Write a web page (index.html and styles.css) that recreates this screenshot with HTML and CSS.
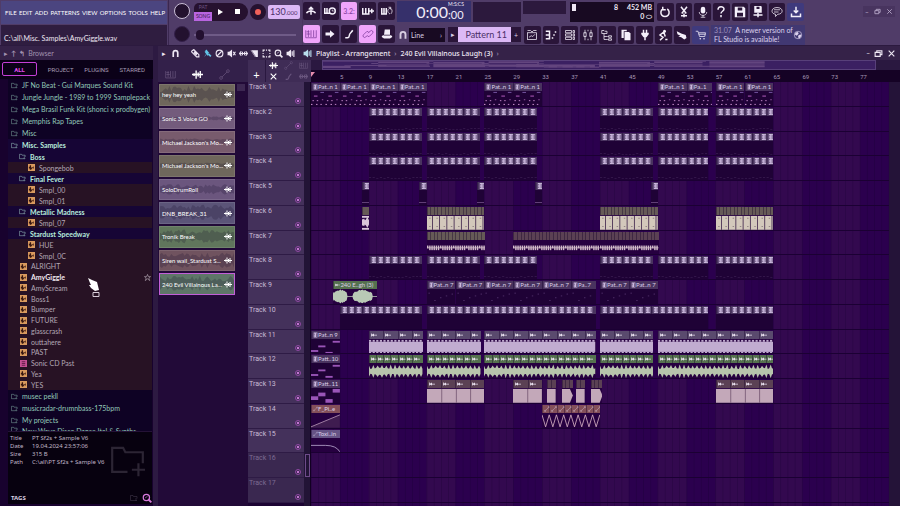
FILE: index.html
```
<!DOCTYPE html>
<html lang="en">
<head>
    <meta charset="UTF-8">
    <meta name="viewport" content="width=device-width, initial-scale=1.0">
    <title>Playlist - Arrangement</title>
    <link rel="stylesheet" href="styles.css">
</head>
<body>
    <!-- icons -->
    <svg class="symbols" aria-hidden="true">
        <symbol id="i-metro" viewBox="0 0 16 16"><path class="mid" d="M8 4v9M2 11c2-4 10-4 12 0M5 6l3-3 3 3"/></symbol>
        <symbol id="i-wait" viewBox="0 0 16 16"><path class="mid" d="M1 4v7h7M4 4v7"/><circle class="mid" cx="11" cy="8" r="4"/><path d="M11 6v2h2"/></symbol>
        <symbol id="i-keysplus" viewBox="0 0 16 16"><path class="mid" d="M1 4v8h8V4M5 4v7M10 8h6M13 5v6"/></symbol>
        <symbol id="i-keysloop" viewBox="0 0 16 16"><path class="mid" d="M1 4v8h6V4M4 4v7"/><path d="M12 4c-4 2-4 6 0 8M12 4c4 2 3 6 1 8M10 3h3v3"/></symbol>
        <symbol id="i-keys" viewBox="0 0 16 16"><path d="M1 3v10h14V3M4.500 3v9M8 3v9M11.500 3v9M2 5h4M2 8h5"/></symbol>
        <symbol id="i-arrow" viewBox="0 0 16 16"><path class="f" d="M2 6h6V3l6 5-6 5v-3H2z"/></symbol>
        <symbol id="i-slide" viewBox="0 0 16 16"><path class="mid" d="M3 13h3c3 0 2-3 3-5s2-2 4-5"/></symbol>
        <symbol id="i-link" viewBox="0 0 16 16"><path d="M7 10L5 12a2 2 0 0 1-3-3l4-4a2 2 0 0 1 3 1M8 7l3-3a2 2 0 0 1 3 3l-4 4a2 2 0 0 1-3-1"/></symbol>
        <symbol id="i-hat" viewBox="0 0 16 16"><path class="f" d="M5 2h7v7H4zM1 12c0-2 2-3 3-2h8c1-1 3 0 3 2l-3 2H4z"/></symbol>
        <symbol id="i-magnet" viewBox="0 0 16 16"><path class="thick" d="M4 14V7a4 4 0 0 1 8 0v7"/></symbol>
        <symbol id="i-undo" viewBox="0 0 16 16"><path class="mid" d="M5 4a5.500 5.500 0 1 0 6 0M5 1v4h4"/></symbol>
        <symbol id="i-cut" viewBox="0 0 16 16"><path class="mid" d="M4 1l7 9M12 1L5 10M8 10v5M4 13h8"/></symbol>
        <symbol id="i-mic" viewBox="0 0 16 16"><rect class="f" x="5" y="1" width="6" height="9" rx="3"/><path d="M3 8c0 6 10 6 10 0M8 12v3M5 15h6"/></symbol>
        <symbol id="i-help" viewBox="0 0 16 16"><path class="mid" d="M4 5c0-5 8-5 8-1 0 3-4 3-4 6M8 12v3"/></symbol>
        <symbol id="i-save" viewBox="0 0 16 16"><path class="f" fill-rule="evenodd" d="M1 1h12l2 2v12H1zM5 2v4h6V2zM4 9v5h8V9z"/></symbol>
        <symbol id="i-savenew" viewBox="0 0 16 16"><path class="f" fill-rule="evenodd" d="M3 0h9l1 1v8H3zM6 1v3h4V1z"/><path class="mid" d="M2 12h12M8 9v6"/></symbol>
        <symbol id="i-chat" viewBox="0 0 16 16"><path d="M8 2c9 0 9 9 1 9l-3 3v-3C-1 10 0 2 8 2zM4 5h8M4 8h6"/></symbol>
        <symbol id="i-down" viewBox="0 0 16 16"><path class="mid" d="M8 1v8M5 6l3 3 3-3M2 10v4h12v-4"/></symbol>
        <symbol id="i-playlist" viewBox="0 0 16 16"><rect x="2" y="5" width="12" height="9"/><path d="M2 2h4M10 2h4M4 11l3-2 2 1 3-3M6 2l2 2 2-2"/></symbol>
        <symbol id="i-roll" viewBox="0 0 16 16"><path class="mid" d="M1 3h5M1 8h5M1 13h5M6 2v12M9 12h2M11 8h2M13 4h2"/></symbol>
        <symbol id="i-rack" viewBox="0 0 16 16"><path d="M2 2h8v3H2zM2 6.500h8v3H2zM2 11h8v3H2zM12 2h2v3h-2zM12 6.500h2v3h-2zM12 11h2v3h-2z"/></symbol>
        <symbol id="i-mixer" viewBox="0 0 16 16"><path d="M4 1v5M4 9v6M12 1v5M12 9v6M8 1v2M8 13v2"/><rect x="2.500" y="5" width="3" height="5"/><rect x="10.500" y="5" width="3" height="5"/></symbol>
        <symbol id="i-tree" viewBox="0 0 16 16"><path d="M1 2h3l1 1h3v3H1zM4 6v8h5M4 10h5M10 9h4v2h-4zM10 13h4v2h-4z"/></symbol>
        <symbol id="i-page" viewBox="0 0 16 16"><path class="f" d="M2 1h7v2H5v9H2z"/><path class="f" d="M6 4h6l2 2v9H6z"/></symbol>
        <symbol id="i-plug" viewBox="0 0 16 16"><path class="f" d="M5 1h2v4h2V1h2v4h2v2l-3 4H9v4H7v-4H6L3 7V5h2z"/></symbol>
        <symbol id="i-person" viewBox="0 0 16 16"><circle class="f" cx="10" cy="3" r="2"/><path class="mid" d="M9 4L4 8l4 3-4 4M9 4l2 6M11 14h3"/></symbol>
        <symbol id="i-touch" viewBox="0 0 16 16"><path class="f" d="M1 3l6 3 6 2 1 4-3 2-4-3-4-1 3-1-4-2z"/></symbol>
        <symbol id="i-cart" viewBox="0 0 16 16"><path d="M1 3h3l2 7h7l1-5H5M5 7h9"/><circle class="f" cx="7" cy="13" r="1"/><circle class="f" cx="12" cy="13" r="1"/></symbol>
        <symbol id="i-globe" viewBox="0 0 16 16"><circle cx="8" cy="8" r="6"/><path class="f" d="M4 4l4-1 1 3-3 3-3-2zM9 8l4-1v3l-3 4-2-3z"/></symbol>
        <symbol id="i-folder" viewBox="0 0 16 16"><path d="M10 13H1V3h5l1 2h7v4M12 8v6M10 12l2 2 2-2"/></symbol>
        <symbol id="i-folderplus" viewBox="0 0 16 16"><path d="M8 13H1V2h5l1 2h8v5M13 9v6M10 12h6"/></symbol>
        <symbol id="i-sample" viewBox="0 0 8 8"><path fill="#d99a5e" stroke="none" d="M0 0h8v8H0z"/><path fill="#37160f" stroke="none" d="M1 3h1V1.500h1.500V4H5L6.500 2.500v3L5 4.500 3.500 6.500H2V5H1z"/></symbol>
        <symbol id="i-song" viewBox="0 0 8 8"><path fill="#c44f93" stroke="none" d="M0 0h8v8H0z"/><path d="M2 2h4M2 4h4M2 6h4" stroke="#5b1945"/></symbol>
        <symbol id="i-wave" viewBox="0 0 16 16"><path class="mid" d="M0 8h16M3 6v4M6 2v12M9 5v6M12 3v10"/></symbol>
        <symbol id="i-auto" viewBox="0 0 16 16"><path d="M4 12l8-8"/><circle cx="3" cy="13" r="2"/><circle cx="13" cy="3" r="2"/></symbol>
        <symbol id="i-brush" viewBox="0 0 16 16"><path class="thick" d="M5 2l5 6M4 4l5 7M10 9l4 4"/><path d="M3 13c2-1 1-3 3-4"/></symbol>
        <symbol id="i-pencil" viewBox="0 0 16 16"><path class="mid" d="M2 3l3-2 9 9v4h-4L1 5zM5 6l5 5M6 4l5 5"/></symbol>
        <symbol id="i-ban" viewBox="0 0 16 16"><circle class="mid" cx="8" cy="8" r="6"/><path class="mid" d="M4 12l8-8"/></symbol>
        <symbol id="i-mute" viewBox="0 0 16 16"><path class="f" d="M1 5h3l5-4v14l-5-4H1z"/><path class="mid" d="M11 5l4 6M15 5l-4 6"/></symbol>
        <symbol id="i-slip" viewBox="0 0 16 16"><path class="mid" d="M1 8h14M4 4L1 8l3 4M12 4l3 4-3 4M6 5v6M10 5v6"/></symbol>
        <symbol id="i-slice" viewBox="0 0 16 16"><path class="f" d="M1 2h13v12H9z"/><path d="M2 2l8 12" stroke="#3a264f"/></symbol>
        <symbol id="i-select" viewBox="0 0 16 16"><path class="mid" d="M2 5V2h3M11 2h3v3M14 11v3h-3M5 14H2v-3M7 2h2M7 14h2M2 7v2M14 7v2"/></symbol>
        <symbol id="i-zoom" viewBox="0 0 16 16"><circle class="mid" cx="7" cy="7" r="5"/><path class="thick" d="M10 10l5 5"/><path d="M5 8l4-3"/></symbol>
        <symbol id="i-speaker" viewBox="0 0 16 16"><path class="f" d="M1 5h3l5-4v14l-5-4H1z"/><path class="mid" d="M11 4v8M14 2v12"/></symbol>
        <symbol id="i-pat" viewBox="0 0 8 8"><path fill="#cbb8dd" stroke="none" d="M1 0h6v8H1z"/><path fill="#49335f" stroke="none" d="M1 2h2v1H1zM1 5h2v1H1zM5 1h1v6H5z"/></symbol>
        <symbol id="i-clip" viewBox="0 0 8 8"><path fill="#e8dfee" stroke="none" d="M0 2h1v1.500L4 2v1.500L8 3.500v1H4V6L1 4.500V6H0z"/></symbol>
        <symbol id="i-win" viewBox="0 0 16 16"><path class="mid" d="M2 6h9v7H2zM5 6V3h9v7h-3"/></symbol>
        <symbol id="i-x" viewBox="0 0 16 16"><path class="mid" d="M3 3l10 10M13 3L3 13"/></symbol>
        <symbol id="i-star" viewBox="0 0 16 16"><path d="M8 1l2 5h5l-4 3 2 6-5-4-5 4 2-6-4-3h5z"/></symbol>
    </svg>

    <header class="top">
        <div class="top-left">
            <nav class="menu">
                <a href="#">FILE</a><a href="#">EDIT</a><a href="#">ADD</a><a href="#">PATTERNS</a><a href="#">VIEW</a><a href="#">OPTIONS</a><a href="#">TOOLS</a><a href="#">HELP</a>
            </nav>
            <div class="hint">C:\all\Misc. Samples\AmyGiggle.wav</div>
        </div>
        <div class="knobs">
            <span class="knob"></span>
            <span class="knob small"></span>
        </div>
        <div class="transport">
            <div class="line">
                <div class="pill">
                    <div class="mode"><button>PAT</button><button class="on">SONG</button></div>
                    <button class="play" aria-label="Play"></button>
                    <button class="stop" aria-label="Stop"></button>
                </div>
                <button class="rec" aria-label="Record"></button>
                <div class="tempo">130<small>.000</small></div>
            </div>
            <div class="line"><input class="pos" type="range" min="0" max="100" value="2" aria-label="Song position"></div>
        </div>
        <div class="tools five">
            <button aria-label="Metronome"><svg><use href="#i-metro"/></svg></button>
            <button aria-label="Wait"><svg><use href="#i-wait"/></svg></button>
            <button class="lit count">3.2:</button>
            <button aria-label="Overdub"><svg><use href="#i-keysplus"/></svg></button>
            <button aria-label="Loop record"><svg><use href="#i-keysloop"/></svg></button>
            <button class="lit" aria-label="Typing keyboard"><svg><use href="#i-keys"/></svg></button>
            <button aria-label="Follow"><svg><use href="#i-arrow"/></svg></button>
            <button aria-label="Slide"><svg><use href="#i-slide"/></svg></button>
            <button class="lit" aria-label="Link"><svg><use href="#i-link"/></svg></button>
            <button aria-label="Tutorial"><svg><use href="#i-hat"/></svg></button>
        </div>
        <div class="center">
            <div class="line displays">
                <div class="clock">
                    <b>0:00</b>
                    <div><small>M:S:CS</small><span>:00</span></div>
                </div>
                <div class="box"></div>
                <div class="box half"></div>
                <div class="cpu"><i></i><div><b>8</b><b>452 MB</b></div><div><b></b><b>0 ⬭</b></div></div>
                <div class="tools eight">
                    <button aria-label="Undo"><svg><use href="#i-undo"/></svg></button>
                    <button aria-label="Cut"><svg><use href="#i-cut"/></svg></button>
                    <button aria-label="Record audio"><svg><use href="#i-mic"/></svg></button>
                    <button aria-label="Help"><svg><use href="#i-help"/></svg></button>
                    <button aria-label="Save"><svg><use href="#i-save"/></svg></button>
                    <button aria-label="Save new"><svg><use href="#i-savenew"/></svg></button>
                    <button aria-label="Info"><svg><use href="#i-chat"/></svg></button>
                    <button class="blue" aria-label="Download"><svg><use href="#i-down"/></svg></button>
                </div>
            </div>
            <div class="line">
                <svg class="snap"><use href="#i-magnet"/></svg>
                <label class="snap-mode"><select aria-label="Snap"><option>Line</option></select>›</label>
                <div class="pattern">
                    <button aria-label="Pattern list">▸</button>
                    <input value="Pattern 11" aria-label="Pattern">
                    <button aria-label="Add pattern">+</button>
                </div>
                <div class="tools windows">
                    <button aria-label="Playlist"><svg><use href="#i-playlist"/></svg></button>
                    <button aria-label="Piano roll"><svg><use href="#i-roll"/></svg></button>
                    <button aria-label="Channel rack"><svg><use href="#i-rack"/></svg></button>
                    <button aria-label="Mixer"><svg><use href="#i-mixer"/></svg></button>
                    <button aria-label="Browser"><svg><use href="#i-tree"/></svg></button>
                    <button aria-label="Plugins"><svg><use href="#i-page"/></svg></button>
                    <button aria-label="Plug-in picker"><svg><use href="#i-plug"/></svg></button>
                    <button aria-label="Stop sound"><svg><use href="#i-person"/></svg></button>
                    <button aria-label="Touch"><svg><use href="#i-touch"/></svg></button>
                    <button class="blue" aria-label="Shop"><svg><use href="#i-cart"/></svg></button>
                </div>
                <div class="news">
                    <p><time>31.07</time>&nbsp; A newer version of<br>FL Studio is available!</p>
                    <svg><use href="#i-globe"/></svg>
                </div>
            </div>
        </div>
        <div class="win-btns">
            <button aria-label="Minimize">‒</button>
            <button aria-label="Restore"><svg><use href="#i-win"/></svg></button>
            <button aria-label="Close"><svg><use href="#i-x"/></svg></button>
        </div>
    </header>

    <main class="work">
        <aside class="browser">
            <div class="browser-title"><span>▸</span><b>↑</b><b>↰</b>Browser</div>
            <div class="tabs">
                <button class="active">ALL</button>
                <button>PROJECT</button>
                <button>PLUGINS</button>
                <button>STARRED</button>
            </div>
            <ul class="tree">
                <li class="folder"><svg><use href="#i-folder"/></svg>JF No Beat - Gui Marques Sound Kit</li>
                <li class="folder"><svg><use href="#i-folder"/></svg>Jungle Jungle - 1989 to 1999 Samplepack</li>
                <li class="folder"><svg><use href="#i-folder"/></svg>Mega Brasil Funk Kit (shonci x prodbygen)</li>
                <li class="folder"><svg><use href="#i-folder"/></svg>Memphis Rap Tapes</li>
                <li class="folder"><svg><use href="#i-folder"/></svg>Misc</li>
                <li class="folder open"><svg><use href="#i-folder"/></svg>Misc. Samples</li>
                <li class="sub open"><svg><use href="#i-folder"/></svg>Boss</li>
                <li class="deep"><svg><use href="#i-sample"/></svg>Spongebob</li>
                <li class="sub open"><svg><use href="#i-folder"/></svg>Final Fever</li>
                <li class="deep"><svg><use href="#i-sample"/></svg>Smpl_00</li>
                <li class="deep"><svg><use href="#i-sample"/></svg>Smpl_01</li>
                <li class="sub open"><svg><use href="#i-folder"/></svg>Metallic Madness</li>
                <li class="deep"><svg><use href="#i-sample"/></svg>Smpl_07</li>
                <li class="sub open"><svg><use href="#i-folder"/></svg>Stardust Speedway</li>
                <li class="deep"><svg><use href="#i-sample"/></svg>HUE</li>
                <li class="deep"><svg><use href="#i-sample"/></svg>Smpl_0C</li>
                <li class="leaf"><svg><use href="#i-sample"/></svg>ALRIGHT</li>
                <li class="leaf current"><svg><use href="#i-sample"/></svg>AmyGiggle<svg class="star"><use href="#i-star"/></svg></li>
                <li class="leaf"><svg><use href="#i-sample"/></svg>AmyScream</li>
                <li class="leaf"><svg><use href="#i-sample"/></svg>Boss1</li>
                <li class="leaf"><svg><use href="#i-sample"/></svg>Bumper</li>
                <li class="leaf"><svg><use href="#i-sample"/></svg>FUTURE</li>
                <li class="leaf"><svg><use href="#i-sample"/></svg>glasscrash</li>
                <li class="leaf"><svg><use href="#i-sample"/></svg>outtahere</li>
                <li class="leaf"><svg><use href="#i-sample"/></svg>PAST</li>
                <li class="leaf"><svg><use href="#i-song"/></svg>Sonic CD Past</li>
                <li class="leaf"><svg><use href="#i-sample"/></svg>Yea</li>
                <li class="leaf"><svg><use href="#i-sample"/></svg>YES</li>
                <li class="folder"><svg><use href="#i-folder"/></svg>musec pekll</li>
                <li class="folder"><svg><use href="#i-folder"/></svg>musicradar-drumnbass-175bpm</li>
                <li class="folder"><svg><use href="#i-folder"/></svg>My projects</li>
                <li class="folder cut"><svg><use href="#i-folder"/></svg>New Wave Disco Dance Ital &amp; Synths</li>
            </ul>
            <div class="info">
                <dl>
                    <dt>Title</dt><dd>PT Sf2s + Sample V6</dd>
                    <dt>Date</dt><dd>19.04.2024 23:57:06</dd>
                    <dt>Size</dt><dd>315 B</dd>
                    <dt>Path</dt><dd>C:\all\PT Sf2s + Sample V6</dd>
                </dl>
                <svg><use href="#i-folderplus"/></svg>
            </div>
            <div class="tags">
                <label for="tags">TAGS</label>
                <input id="tags">
                <svg><use href="#i-folder"/></svg>
                <svg class="search"><use href="#i-zoom"/></svg>
            </div>
            <svg class="pointer" viewBox="0 0 12 20"><path fill="#fff" stroke="none" d="M0 0l4 2 5 2 2 8-4 1-4-3-2-3h2L2 5z"/><path fill="none" stroke="#d8ccd8" d="M5 14.500h6v4H5z"/></svg>
        </aside>

        <section class="playlist">
            <div class="title">
                <span class="caret">▸</span>
                <svg><use href="#i-magnet"/></svg>
                <div class="modes">
                    <svg><use href="#i-pencil"/></svg>
                    <svg class="cyan"><use href="#i-brush"/></svg>
                    <svg><use href="#i-ban"/></svg>
                    <svg><use href="#i-mute"/></svg>
                    <svg><use href="#i-slip"/></svg>
                    <svg><use href="#i-slice"/></svg>
                    <svg><use href="#i-select"/></svg>
                    <svg><use href="#i-zoom"/></svg>
                    <svg><use href="#i-speaker"/></svg>
                </div>
                <svg class="out"><use href="#i-speaker"/></svg>
                <h1>Playlist - Arrangement <em>›</em> 240 Evil Villainous Laugh (3) <em>›</em></h1>
                <div class="title-btns">
                    <button aria-label="Minimize">‒</button>
                    <button aria-label="Restore"><svg><use href="#i-win"/></svg></button>
                    <button aria-label="Close"><svg><use href="#i-x"/></svg></button>
                </div>
            </div>
            <div class="panes">
                <div class="picker">
                    <div class="picker-tabs">
                        <svg class="dim"><use href="#i-keys"/></svg>
                        <svg><use href="#i-wave"/></svg>
                        <svg class="dim"><use href="#i-auto"/></svg>
                    </div>
                    <div class="picker-main">
                        <div class="picker-list" id="picker"></div>
                        <div class="picker-bar"></div>
                    </div>
                </div>
                <div class="arrange">
                    <div class="corner">
                        <button aria-label="Add track">+</button>
                        <div>
                            <svg><use href="#i-wave"/></svg><svg class="dim"><use href="#i-auto"/></svg><svg class="dim"><use href="#i-keys"/></svg>
                            <svg><use href="#i-x"/></svg><svg class="dim"><use href="#i-slide"/></svg><svg class="dim"><use href="#i-slip"/></svg>
                        </div>
                    </div>
                    <div class="head">
                        <div class="overview"><svg id="overview" viewBox="0 0 800 90" preserveAspectRatio="none"></svg></div>
                        <div class="ruler" id="ruler"></div>
                    </div>
                    <div class="tracks" id="tracks"></div>
                    <div class="gutter"><i></i></div>
                    <div class="lanes" id="lanes"></div>
                    <div class="scroll"></div>
                </div>
            </div>
        </section>
    </main>
    <script src="script.js"></script>
</body>
</html>
```
FILE: styles.css
```
* {
    margin: 0;
    padding: 0;
    box-sizing: border-box;
}

html,
body {
    width: 100%;
    height: 100%;
}

body {
    display: flex;
    flex-direction: column;
    overflow: hidden;
    background: #1c0433;
    color: #d9cfe2;
    font: 7px "Lato", sans-serif;
}

button,
input,
select {
    border: none;
    background: none;
    color: inherit;
    font: inherit;
    outline: none;
}

svg {
    display: block;
    flex: none;
    width: 10px;
    height: 10px;
    fill: none;
    stroke: currentColor;
    stroke-width: 1;
}

.symbols {
    position: absolute;
    width: 0;
    height: 0;
}

.f {
    fill: currentColor;
    stroke: none;
}

.mid {
    stroke-width: 2;
}

.thick {
    stroke-width: 3;
}

/* top bar */
.top {
    display: flex;
    flex: none;
    height: 46px;
    background: #503c68;
    border-bottom: 1px solid #2c1a3f;
}

.top-left {
    width: 168px;
    padding: 1px 1px 0 1px;
}

.menu {
    display: flex;
    justify-content: space-between;
    align-items: center;
    height: 23px;
    padding: 0 2px 0 4px;
    background: #4b4580;
    font-size: 6px;
}

.menu a {
    color: #fff;
    text-decoration: none;
}

.hint {
    height: 20px;
    margin-top: 1px;
    padding: 7px 3px 0;
    background: #2f1d40;
    color: #efe8f4;
    line-height: 12px;
    white-space: nowrap;
}

.knobs {
    display: flex;
    flex-direction: column;
    justify-content: space-around;
    align-items: center;
    width: 26px;
    border-left: 1px solid #3a2750;
}

.knob {
    width: 16px;
    height: 16px;
    border: 1px solid #c9bdd6;
    border-radius: 50%;
    background: #23112f;
}

.knob.small {
    border-color: #34204a;
}

.line {
    display: flex;
    align-items: center;
    height: 23px;
}

.transport {
    width: 109px;
    border-right: 1px solid #49355f;
}

.pill {
    display: flex;
    align-items: center;
    width: 54px;
    height: 18px;
    border-radius: 5px 9px 9px 5px;
    background: #26112f;
}

.mode {
    display: flex;
    flex-direction: column;
    width: 18px;
    font-size: 5px;
    line-height: 9px;
}

.mode button {
    height: 9px;
    color: #6d5483;
}

.mode .on {
    background: #b965e0;
    color: #3a1850;
}

.play {
    width: 0;
    height: 0;
    margin: 0 12px 0 6px;
    border-left: 5px solid #fff;
    border-top: 3px solid transparent;
    border-bottom: 3px solid transparent;
}

.stop {
    width: 5px;
    height: 5px;
    background: #fff;
}

.rec {
    width: 16px;
    height: 16px;
    margin: 0 2px;
    border: 5px solid #26112f;
    border-radius: 50%;
    background: #f0605a;
}

.tempo {
    width: 32px;
    height: 14px;
    padding-left: 2px;
    border-radius: 2px;
    background: #dcb9f6;
    color: #4b2f68;
    font-size: 9px;
    line-height: 14px;
}

.tempo small {
    font-size: 6px;
}

.pos {
    width: 102px;
    height: 16px;
    appearance: none;
}

.pos::-webkit-slider-runnable-track {
    height: 2px;
    background: #6f5b87;
}

.pos::-webkit-slider-thumb {
    width: 8px;
    height: 10px;
    margin-top: -4px;
    border-radius: 4px;
    background: #231030;
    appearance: none;
}

.tools {
    display: grid;
    flex: none;
    gap: 2px;
}

.tools button {
    display: flex;
    justify-content: center;
    align-items: center;
    height: 18px;
    border-radius: 2px;
    background: #2a1539;
    color: #f4effa;
}

.tools svg {
    width: 12px;
    height: 12px;
}

.tools .lit {
    background: #f0a5fb;
    color: #7b3a9a;
}

.tools .blue {
    background: #3f3a7d;
}

.five {
    grid-template-columns: repeat(5, 1fr);
    gap: 5px 2px;
    align-content: center;
    width: 92px;
    margin-right: 2px;
}

.center {
    flex: none;
}

.displays {
    gap: 2px;
}

.clock {
    display: flex;
    justify-content: flex-end;
    width: 74px;
    height: 21px;
    padding-right: 5px;
    background: #36306b;
    color: #f1ecf8;
}

.clock b {
    font-size: 16px;
    font-weight: normal;
    line-height: 22px;
}

.clock div {
    display: flex;
    flex-direction: column;
    width: 18px;
}

.clock span {
    font-size: 11px;
    line-height: 13px;
}

.clock small {
    font-size: 5px;
    line-height: 7px;
}

.box {
    width: 48px;
    height: 20px;
    background: #2c193d;
}

.box.half {
    width: 43px;
    height: 13px;
    align-self: flex-start;
    margin-top: 1px;
}

.cpu {
    position: relative;
    width: 84px;
    height: 20px;
    margin: 0 1px 0 2px;
    padding: 1px 2px;
    background: #180a22;
    color: #ece6f2;
    line-height: 9px;
}

.cpu i {
    position: absolute;
    top: 2px;
    left: 2px;
    width: 4px;
    height: 7px;
    background: #efe8f4;
}

.cpu div {
    display: grid;
    grid-template-columns: 46px 1fr;
    text-align: right;
}

.snap {
    width: 12px;
}

.snap-mode {
    display: flex;
    align-items: center;
    width: 36px;
    height: 14px;
    padding: 0 3px 0 2px;
    background: #180a22;
}

.snap-mode select {
    flex: 1;
    min-width: 0;
    appearance: none;
}

.pattern {
    display: flex;
    margin-left: 3px;
    height: 15px;
}

.pattern button {
    width: 10px;
    background: #2a1539;
}

.pattern input {
    width: 53px;
    padding-right: 4px;
    background: #dcb9f6;
    color: #4b2f68;
    font-size: 9px;
    text-align: right;
}

.windows {
    grid-template-columns: repeat(10, 1fr);
    width: 185px;
    margin: 0 2px 0 3px;
}

.eight {
    grid-template-columns: repeat(8, 1fr);
    width: 147px;
}

.news {
    display: flex;
    align-items: center;
    justify-content: space-between;
    width: 94px;
    height: 20px;
    padding: 0 3px;
    background: #413872;
    color: #ddd2ee;
    line-height: 9px;
    white-space: nowrap;
}

.news time {
    color: #9b8fbd;
}

.win-btns {
    display: flex;
    align-items: center;
    justify-content: space-between;
    width: 32px;
    height: 11px;
    margin: 6px 5px 0 auto;
    padding: 0 2px;
    background: #48345f;
    color: #b8a9c9;
}

.win-btns svg,
.title-btns svg {
    width: 7px;
    height: 7px;
}

/* work area */
.work {
    display: flex;
    flex: 1;
    min-height: 0;
}

.browser {
    position: relative;
    display: flex;
    flex: none;
    flex-direction: column;
    width: 153px;
    padding: 0 1px 2px 8px;
    background: #18022e;
}

.browser-title {
    display: flex;
    flex: none;
    align-items: center;
    gap: 3px;
    height: 14px;
    margin: 0 -1px 0 -8px;
    padding-left: 4px;
    background: #352248;
    color: #a293b0;
}

.tabs {
    display: flex;
    flex: none;
    justify-content: space-between;
    align-items: center;
    height: 19px;
    margin: 0 -1px 0 -8px;
    padding: 0 8px 1px 2px;
    background: #0b0118;
}

.tabs button {
    color: #a79bb5;
    font: 6px "Roboto", sans-serif;
}

.tabs .active {
    width: 35px;
    height: 14px;
    border: 1px solid #c43fd6;
    border-radius: 2px;
    color: #e44cf0;
    font-weight: bold;
}

.tree {
    display: flex;
    flex: 1;
    flex-direction: column;
    min-height: 0;
    overflow: hidden;
    list-style: none;
    background: #0e0224;
}

.tree li {
    display: flex;
    flex: 0 0 11px;
    align-items: center;
    gap: 4px;
    min-height: 0;
    overflow: hidden;
    color: #b3a7b4;
    white-space: nowrap;
    line-height: 10px;
}

.tree svg {
    width: 7px;
    height: 7px;
}

.tree .folder {
    flex-basis: 12px;
    padding-left: 3px;
    color: #93c9b8;
}

.tree .sub {
    padding-left: 11px;
    background: #130230;
    font-weight: bold;
}

.tree .open {
    color: #b8ecdc;
    background: #160535;
    font-weight: bold;
}

.tree .deep {
    padding-left: 20px;
    background: #271224;
}

.tree .leaf {
    flex-shrink: 1;
    padding-left: 12px;
    background: #271224;
}

.tree .current {
    color: #f0e6ee;
    font-weight: bold;
}

.tree .star {
    margin: 0 1px 0 auto;
}

.tree .cut {
    flex-basis: 5px;
    align-items: flex-start;
}

.info {
    display: flex;
    flex: none;
    height: 60px;
    padding: 2px 2px;
    background: #07010f;
    border-top: 1px solid #241236;
    color: #c0b6c8;
    font: 6px/8px "Noto Sans", sans-serif;
}

.info dl {
    display: grid;
    grid-template-columns: 22px auto;
    align-content: start;
    white-space: nowrap;
}

.info svg {
    position: absolute;
    right: 8px;
    bottom: 27px;
    width: 35px;
    height: 36px;
    color: #2c2534;
}

.tags {
    display: flex;
    flex: none;
    align-items: center;
    gap: 4px;
    height: 13px;
    background: #07010f;
    font: bold 6px "Noto Sans", sans-serif;
}

.tags label {
    padding: 0 3px;
}

.tags input {
    flex: 1;
    min-width: 0;
}

.tags svg {
    width: 8px;
    height: 8px;
    color: #4a4154;
}

.tags .search {
    width: 10px;
    height: 10px;
    color: #d779dc;
}

.pointer {
    position: absolute;
    top: 232px;
    left: 88px;
    width: 12px;
    height: 20px;
}

/* playlist */
.playlist {
    display: flex;
    flex: 1;
    flex-direction: column;
    min-width: 0;
    border-left: 5px solid #2d1a42;
}

.title {
    display: flex;
    flex: none;
    align-items: center;
    height: 14px;
    padding-left: 4px;
    background: #352248;
    color: #efe8f4;
}

.title svg {
    width: 9px;
    height: 9px;
}

.title .caret {
    width: 9px;
}

.modes {
    display: flex;
    justify-content: space-between;
    width: 104px;
    margin: 0 8px 0 11px;
}

.modes .cyan {
    color: #62c4e6;
}

.title .out {
    color: #b9dcec;
}

.title h1 {
    margin-left: 4px;
    font: 7px "Noto Sans", sans-serif;
    font-weight: 500;
    white-space: nowrap;
}

.title h1 em {
    margin: 0 2px;
    font-style: normal;
    color: #9c8cb0;
}

.title-btns {
    display: flex;
    align-items: center;
    gap: 4px;
    margin: 0 4px 0 auto;
}

.panes {
    display: flex;
    flex: 1;
    min-height: 0;
}

.picker {
    flex: none;
    width: 90px;
    background: #220a38;
}

.picker-tabs {
    display: flex;
    justify-content: space-between;
    align-items: flex-end;
    height: 22px;
    padding: 0 18px 2px 7px;
    background: #33204a;
    color: #fff;
}

.picker-tabs svg {
    width: 11px;
    height: 11px;
}

.picker-tabs .dim,
.corner .dim {
    color: #6a567f;
}

.picker-main {
    display: flex;
    gap: 2px;
    padding: 2px 0 0 1px;
}

.picker-list {
    display: grid;
    grid-template-columns: minmax(0, 1fr);
    grid-auto-rows: 1fr;
    gap: 2px;
    width: 76px;
    height: 211px;
}

.picker-bar {
    width: 8px;
    height: 7px;
    background: #3d2852;
}

.pick {
    position: relative;
    display: flex;
    justify-content: space-between;
    align-items: center;
    padding: 0 2px;
    border: 1px solid rgba(255, 255, 255, 0.1);
    color: #fff;
    font-size: 6px;
    white-space: nowrap;
}

.pick.selected {
    border-color: #c25fd8;
}

.pick span,
.pick .mark {
    z-index: 1;
}

.pick .mark {
    width: 8px;
    height: 9px;
}

.pick .bg {
    position: absolute;
    top: 0;
    left: 0;
    width: 100%;
    height: 100%;
}

.olive { background: #6f675c; }
.mauve { background: #735b7c; }
.rose { background: #785b6d; }
.plum { background: #6b567e; }
.slate { background: #5b5478; }
.green { background: #60765c; }
.brown { background: #70535f; }
.sage { background: #5e7668; }

.arrange {
    display: grid;
    flex: 1;
    grid-template-columns: 56px 7px 1fr 11px;
    grid-template-rows: 22px 1fr;
    min-width: 0;
}

.corner {
    display: flex;
    align-items: flex-end;
    grid-column: 1 / 3;
    background: #3f2c56;
    color: #fff;
}

.corner button {
    width: 17px;
    height: 14px;
    font-size: 11px;
    line-height: 12px;
}

.corner div {
    display: grid;
    flex: 1;
    grid-template-columns: repeat(3, 1fr);
    height: 22px;
    justify-items: center;
    align-items: center;
    border-left: 1px solid #2a1840;
}

.corner svg {
    width: 9px;
    height: 9px;
}

.head {
    grid-column: 3 / 5;
    background: #2a1840;
}

.overview {
    height: 10px;
    margin: 0 24px 0 11px;
    background: #3b2062;
    border: 1px solid #58407a;
}

.overview svg {
    width: 100%;
    height: 8px;
}

.ruler {
    display: flex;
    height: 12px;
    padding-right: 11px;
    background: #150225;
}

.ruler span {
    flex: 1;
    color: #a698b5;
    font: 6px/13px "Roboto", sans-serif;
}

.ruler span:first-child::before {
    display: block;
    width: 4px;
    height: 5px;
    margin-top: 2px;
    background: #e58cae;
    clip-path: polygon(0 0, 100% 0, 0 100%);
    content: "";
}

.tracks,
.lanes {
    display: grid;
    grid-template-rows: repeat(17, 1fr) 3px;
    min-height: 0;
}

.track {
    display: flex;
    justify-content: space-between;
    min-height: 0;
    padding: 0 3px 0 1px;
    border-bottom: 1px solid #2e1b45;
    background: #44315b;
    color: #c8bbd6;
    font: 7px/10px "Roboto", sans-serif;
}

.track.empty {
    background: #3a2850;
    color: #7d6b92;
}

.track button {
    align-self: flex-end;
    width: 6px;
    height: 6px;
    margin-bottom: 2px;
    border: 1px solid #9048a4;
    border-radius: 50%;
    background: #ee8bf8;
    background-clip: content-box;
    padding: 1px;
}

.gutter {
    display: grid;
    grid-template-rows: repeat(17, 1fr) 3px;
    border-right: 1px solid #120022;
    background: #221436;
}

.gutter i {
    grid-row: 16;
    margin: 1px 0 1px 1px;
    border: 1px solid #6e4b8a;
}

/* one stripe pair covers eight bars, one line per bar */
.lanes {
    overflow: hidden;
    background-image: linear-gradient(90deg, rgba(24, 0, 50, 0.3) 1px, transparent 1px), linear-gradient(90deg, #33094f 50%, #2b004e 50%);
    background-size: 1.25% 100%, 10% 100%;
}

.lane {
    position: relative;
    min-height: 0;
    border-bottom: 1px solid #1b0033;
}

.scroll {
    background: #241338;
}

.clip {
    position: absolute;
    top: 1px;
    bottom: 0;
    display: flex;
    flex-direction: column;
    overflow: hidden;
}

.clip-head {
    display: flex;
    flex: none;
    align-items: center;
    height: 8px;
    color: #dccfe8;
    font-size: 6px;
    line-height: 8px;
    white-space: nowrap;
}

.clip-head span {
    display: flex;
    flex: none;
    align-items: center;
    padding-left: 1px;
    border-left: 1px solid rgba(20, 0, 40, 0.4);
    height: 8px;
}

.clip-head svg {
    width: 6px;
    height: 6px;
}

.clip-head .named svg {
    width: 5px;
}

.clip-body {
    flex: 1;
    width: 100%;
    height: auto;
    min-height: 0;
}

.h-midi { background: #49335f; }
.h-olive { background: #665a57; }
.h-brown { background: #5b4154; }
.h-lilac { background: #5a4a6e; }
.h-green { background: #55714f; }
.h-red { background: #84505a; }
.h-blue { background: #665486; }
.b-midi { background: #1f0236; }
.b-none { background: #260040; }
```
FILE: script.js
```
var BARS = 80;

function icon(name, cls) {
    return '<svg class="' + (cls || '') + '"><use href="#i-' + name + '"/></svg>';
}

function rect(x, y, w, h, color) {
    return '<rect x="' + x + '" y="' + y + '" width="' + w + '" height="' + h + '" fill="' + color + '" stroke="none"/>';
}

// repeatable noise so the waves do not change on reload
function noise(i) {
    var n = Math.sin(i * 12.9898) * 43758.5453;
    return n - Math.floor(n);
}

// symmetric wave around mid, w wide
function wave(w, mid, height, color, step) {
    var top = [], bottom = [];
    for (var x = 0; x <= w; x += step) {
        var h = height(x) / 2;
        top.push(x + ',' + (mid - h));
        bottom.unshift(x + ',' + (mid + h));
    }
    return '<polygon points="' + top.concat(bottom).join(' ') + '" fill="' + color + '" stroke="none"/>';
}

// every body is drawn on bars * 10 by 16
var bodies = {
    melody: function (w) {
        var s = '';
        for (var x = 0; x < w; x += 20) {
            s += rect(x + 4, 5, 5, 1, '#c065c8') + rect(x + 13, 1, 5, 1, '#7a5aa8');
            s += rect(x + 2, 10, 2, 1, '#c98bd0') + rect(x + 8, 10, 2, 1, '#c98bd0') + rect(x + 15, 9, 2, 1, '#9a58a8');
            s += rect(x, 14, 2, 1, '#e0a0e0') + rect(x + 7, 14, 2, 1, '#e0a0e0') + rect(x + 13, 14, 2, 1, '#c98bd0');
        }
        return s;
    },
    faint: function (w) {
        var s = '';
        for (var x = 0; x < w; x += 5) {
            s += rect(x, 13 + Math.round(noise(x)), 3, 1, '#35184c');
        }
        return s;
    },
    dots: function (w) {
        var s = '';
        for (var x = 2; x < w; x += 8) {
            s += rect(x, 3 + Math.round(noise(x) * 9), 2, 1, '#50306a');
        }
        return s;
    },
    single: function (w) {
        return rect(0, 13, w, 1, '#67457d');
    },
    notes: function (w) {
        return rect(0, 12, 10, 2, '#9a55b8') + rect(10, 7, 10, 2, '#9a55b8') + rect(20, 14, 10, 2, '#9a55b8') + rect(30, 2, 10, 2, '#9a55b8');
    },
    bass: function (w) {
        return rect(0, 9, 10, 4, '#9a55b8') + rect(10, 5, 10, 4, '#9a55b8') + rect(20, 12, 10, 4, '#9a55b8') + rect(30, 1, 10, 4, '#9a55b8');
    },
    cream: function (w) {
        var s = rect(0, 1, w, 15, '#d3c8bb');
        for (var x = 7; x < w; x += 10) {
            s += rect(x, 1, 1, 15, '#2a0d3c') + rect(x - 4, 3, 2, 1, '#8d7f80') + rect(x - 4, 12, 2, 1, '#8d7f80');
        }
        return s;
    },
    hit: function (w) {
        return rect(0, 1, w, 2, '#d9c6d8') + rect(0, 14, w, 2, '#d9c6d8') + wave(w, 8, function (x) { return 3 + noise(x + 3) * 9; }, '#d9c6d8', 1);
    },
    thin: function (w) {
        var s = rect(0, 8, w, 1, '#bda6b6');
        for (var x = 0; x < w; x += 3) {
            s += rect(x, 6, 2, x % 18 ? 5 : 3, '#d3bccb');
        }
        return s;
    },
    full: function (w) {
        var s = rect(0, 3, w, 11, '#c1acd0');
        for (var x = 0; x < w; x += 5) {
            s += rect(x, 1, 3, 2, '#c1acd0') + rect(x, 14, 3, 2, '#c1acd0');
        }
        return s;
    },
    drums: function (w) {
        return wave(w, 9, function (x) { return (x % 6 ? 5 : 12) + noise(x) * 3; }, '#b7c4ac', 2);
    },
    pink: function (w) {
        var s = rect(0, 1, w, 15, '#c3a8b9');
        for (var x = 20; x < w; x += 20) {
            s += rect(x, 1, 1, 15, '#6b4c68');
        }
        return s;
    },
    point: function (w) {
        return '<polygon points="0,1 ' + (w - 4) + ',1 ' + w + ',8 ' + (w - 4) + ',16 0,16" fill="#c3a8b9" stroke="none"/>';
    },
    laugh: function (w) {
        return wave(w, 8, function (x) {
            if (x < 20) return 6 + 6 * Math.sin(x / 20 * 3.1) + noise(x) * 3;
            if (x < 28 || x > 54) return 1;
            return 4 + 8 * Math.sin((x - 26) / 30 * 3.1) + noise(x) * 3;
        }, '#b9c9b6', 1);
    },
    ramp: function (w) {
        return '<path d="M0 15L' + w + ' 2V16H0z" fill="#3f1c50" stroke="none"/><path d="M0 15L' + w + ' 2" stroke="#b694b4"/>';
    },
    fall: function (w) {
        return '<path d="M0 8h' + (w / 2) + 'q15 0 ' + (w / 2) + ' 7" stroke="#b9a7cf"/>';
    },
    zigzag: function (w) {
        var d = 'M0 2';
        for (var x = 0; x < w; x += 10) {
            d += 'L' + (x + 5) + ' 15L' + (x + 10) + ' 2';
        }
        return '<path d="' + d + '" stroke="#d8b2c4"/>';
    }
};

// [track, first bar, bars, head colour, body, icon, bars between icons, label]
var clips = [];

function add(track, start, len, head, body, ic, step, label) {
    clips.push([track, start, len, head, body, ic, step, label]);
}

[[1, 4], [5, 4], [9, 4], [13, 4], [25, 4], [29, 4], [49, 4], [53, 3.5], [57, 4], [61, 4]].forEach(function (c) {
    add(1, c[0], c[1], 'midi', 'melody', 'pat', 0, c[1] < 4 ? 'Pa..1' : 'Pat..n 1');
});
[2, 3, 4, 8].forEach(function (t) {
    [[9, 7.4], [17, 7.4], [25, 7.3], [41, 7.4], [49, 7], [57, 8]].forEach(function (c) {
        add(t, c[0], c[1], 'midi', 'faint', 'pat', 1);
    });
});
[8, 16, 24, 32, 48].forEach(function (b) {
    add(5, b, 1, 'midi', 'single', 'pat', 1);
});
add(6, 8, 1, 'olive', 'hit', '', 1);
[17, 41, 57].forEach(function (b) {
    add(6, b, 8, 'olive', 'cream', '', 0.5);
});
add(7, 17, 8.1, 'olive', 'thin', '', 0.5);
add(7, 29, 12, 'brown', 'thin', '', 0.5);
add(7, 41, 8.1, 'brown', 'thin', '', 0.5);
add(9, 4.1, 6.1, 'green', 'laugh', 'clip', 0, '240 E..gh (3)');
[17, 21, 25, 29, 33, 37, 41, 45].forEach(function (b) {
    add(9, b, b == 37 ? 3.4 : 4, 'midi', 'dots', 'pat', 0, b == 37 ? 'Pa..7' : 'Pat..n 7');
});
[[5, 11.4], [17, 23.4], [41, 15], [57, 8]].forEach(function (c) {
    add(10, c[0], c[1], 'midi', '', 'pat', 1);
});
add(11, 1, 4, 'midi', 'notes', 'pat', 0, 'Pat..n 9');
add(12, 1, 4, 'midi', 'notes', 'pat', 0, 'Patt..10');
add(13, 1, 4, 'midi', 'bass', 'pat', 0, 'Patt..11');
[[9, 7.5], [17, 7.5], [25, 15.4], [41, 7.4], [49, 16]].forEach(function (c) {
    add(11, c[0], c[1], 'lilac', 'full', 'clip', 2);
    add(12, c[0], c[1], 'green', 'drums', 'clip', 1);
});
[[17, 8], [29, 4], [57, 8]].forEach(function (c) {
    add(13, c[0], c[1], 'brown', 'pink', 'clip', 2);
});
add(13, 33.7, 1.2, 'brown', 'pink', '', 0.5);
add(13, 35.7, 1.5, 'brown', 'point', '', 0.5);
add(13, 37.7, 1.2, 'brown', 'pink', '', 0.5);
add(13, 39.7, 1.6, 'brown', 'point', '', 0.5);
add(14, 1, 4, 'red', 'ramp', 'auto', 0, 'F_Pi..e');
add(14, 33, 8, 'red', 'zigzag', 'auto', 1);
add(15, 1, 4, 'blue', 'fall', 'auto', 0, 'Toxi..in');

function clipHtml(c) {
    var start = c[1], len = c[2], step = c[6], head = '';
    if (step) {
        for (var b = 0; b + Math.min(step, 1) <= len + 0.01; b += step) {
            head += '<span style="width:' + (step / len * 100) + '%">' + (c[5] ? icon(c[5]) : '') + '</span>';
        }
    } else {
        head = '<span class="named">' + icon(c[5]) + c[7] + '</span>';
    }
    var body = bodies[c[4]] ? bodies[c[4]](len * 10) : '';
    return '<div class="clip" style="left:' + ((start - 1) / BARS * 100) + '%;width:' + (len / BARS * 100) + '%">' +
        '<div class="clip-head h-' + c[3] + '">' + head + '</div>' +
        '<svg class="clip-body ' + (c[3] == 'midi' ? 'b-midi' : 'b-none') + '" viewBox="0 0 ' + (len * 10) + ' 16" preserveAspectRatio="none">' + body + '</svg></div>';
}

var tracks = '', lanes = '';
for (var t = 1; t <= 17; t++) {
    tracks += '<div class="track' + (t > 15 ? ' empty' : '') + '">Track ' + t + '<button aria-label="Mute track ' + t + '"></button></div>';
    lanes += '<div class="lane">' + clips.filter(function (c) { return c[0] == t; }).map(clipHtml).join('') + '</div>';
}
document.getElementById('tracks').innerHTML = tracks;
document.getElementById('lanes').innerHTML = lanes;

var ruler = '<span></span>';
for (var n = 5; n < BARS; n += 4) {
    ruler += '<span>' + n + '</span>';
}
document.getElementById('ruler').innerHTML = ruler;

document.getElementById('overview').innerHTML = clips.map(function (c) {
    return rect((c[1] - 1) * 10, c[0] * 5, c[2] * 10, 4, '#7d5f92');
}).join('');

var samples = [
    ['hey hey yeah', 'olive', 1],
    ['Sonic 3 Voice GO', 'mauve', 0.2],
    ["Michael Jackson's Mo...", 'rose', 0.3],
    ["Michael Jackson's Mo...", 'olive', 0.3],
    ['SoloDrumRoll', 'plum', 0.6],
    ['DNB_BREAK_31', 'slate', 0.9],
    ['Tronik Break', 'green', 0.8],
    ['Siren wail_Stardust S...', 'brown', 0.9],
    ['240 Evil Villainous La...', 'sage', 0.9]
];
document.getElementById('picker').innerHTML = samples.map(function (s, i) {
    return '<button class="pick ' + s[1] + (i == 8 ? ' selected' : '') + '">' +
        '<svg class="bg" viewBox="0 0 78 21" preserveAspectRatio="none">' +
        wave(78, 10, function (x) { return 1 + s[2] * (4 + noise(x + i * 90) * 13); }, 'rgba(20,10,40,0.22)', 2) +
        '</svg><span>' + s[0] + '</span>' + icon('wave', 'mark') + '</button>';
}).join('');
```
